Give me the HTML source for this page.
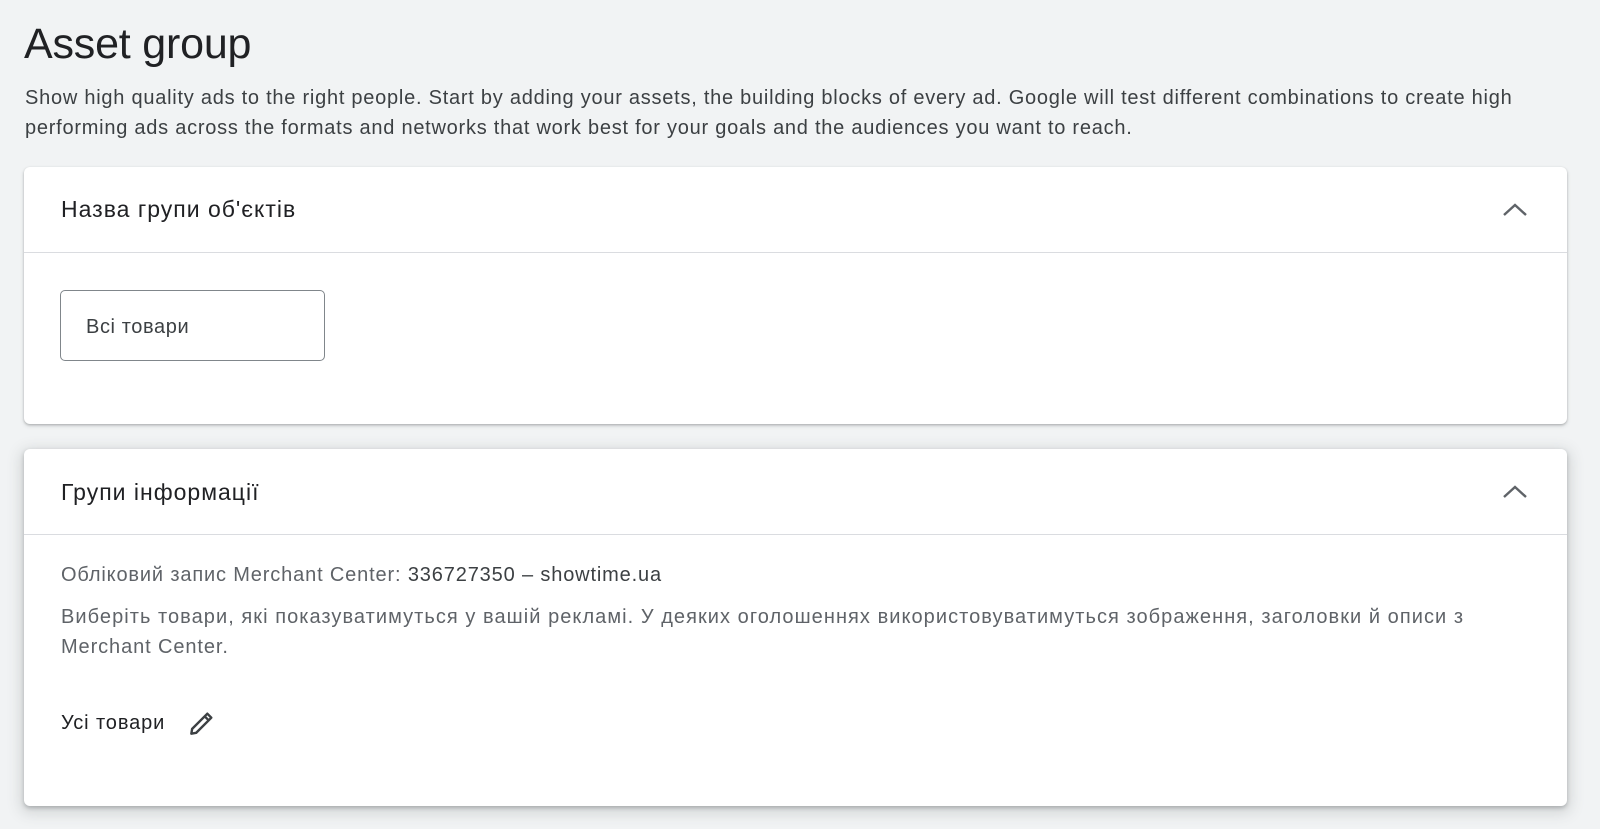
<!DOCTYPE html>
<html><head><meta charset="utf-8"><style>
*{margin:0;padding:0;box-sizing:border-box}
body{width:1600px;height:829px;background:#f1f3f4;font-family:"Liberation Sans","DejaVu Sans",sans-serif;position:relative;overflow:hidden;color:#202124}
.a{position:absolute;white-space:nowrap}
h1{position:absolute;left:24px;top:20px;font-weight:400;font-size:43px;color:#202124;letter-spacing:-0.2px}
.p{left:25px;font-size:20px;color:#3c4043;letter-spacing:0.75px}
.card{position:absolute;left:24px;width:1543px;background:#fff;border-radius:6px}
.c1{top:167px;height:257px;box-shadow:0 1px 2px rgba(60,64,67,.3),0 2px 4px rgba(60,64,67,.15)}
.c2{top:449px;height:357px;box-shadow:0 2px 4px rgba(60,64,67,.3),0 4px 14px 4px rgba(60,64,67,.15)}
.hd{position:absolute;left:37px;font-size:23px;color:#202124;letter-spacing:1px}
.div{position:absolute;left:0;right:0;height:1px;background:#dadce0}
.chev{position:absolute;right:38px}
.t{font-size:20px;color:#5f6368;letter-spacing:0.9px}
</style></head><body>
<h1>Asset group</h1>
<div class="a p" style="top:87px">Show high quality ads to the right people. Start by adding your assets, the building blocks of every ad. Google will test different combinations to create high</div>
<div class="a p" style="top:117px">performing ads across the formats and networks that work best for your goals and the audiences you want to reach.</div>

<div class="card c1">
 <div class="a hd" style="top:29px">Назва групи об'єктів</div>
 <svg class="chev" style="top:33px" width="28" height="18" viewBox="0 0 28 18"><path d="M3 15 L14 5 L25 15" fill="none" stroke="#5f6368" stroke-width="2.4"/></svg>
 <div class="div" style="top:85px"></div>
 <div style="position:absolute;left:36px;top:123px;width:265px;height:71px;border:1px solid #80868b;border-radius:5px"></div>
 <div class="a" style="left:62px;top:149px;font-size:20px;color:#3c4043;letter-spacing:0.6px">Всі товари</div>
</div>

<div class="card c2">
 <div class="a hd" style="top:30px">Групи інформації</div>
 <svg class="chev" style="top:33px" width="28" height="18" viewBox="0 0 28 18"><path d="M3 15 L14 5 L25 15" fill="none" stroke="#5f6368" stroke-width="2.4"/></svg>
 <div class="div" style="top:85px"></div>
 <div class="a t" style="left:37px;top:115px;letter-spacing:0.85px">Обліковий запис Merchant Center: <span style="color:#3c4043">336727350 – showtime.ua</span></div>
 <div class="a t" style="left:37px;top:157px;letter-spacing:1.05px">Виберіть товари, які показуватимуться у вашій рекламі. У деяких оголошеннях використовуватимуться зображення, заголовки й описи з</div>
 <div class="a t" style="left:37px;top:187px">Merchant Center.</div>
 <div class="a" style="left:37px;top:263px;font-size:20px;color:#202124;letter-spacing:0.9px">Усі товари</div>
 <svg style="position:absolute;left:162px;top:258px" width="32" height="32" viewBox="0 0 24 24"><path d="M4 20 L4.6 16.4 L16 5 L19 8 L7.6 19.4 Z M14 7 L17 10" fill="none" stroke="#3c4043" stroke-width="1.8" stroke-linejoin="round"/></svg>
</div>
</body></html>
